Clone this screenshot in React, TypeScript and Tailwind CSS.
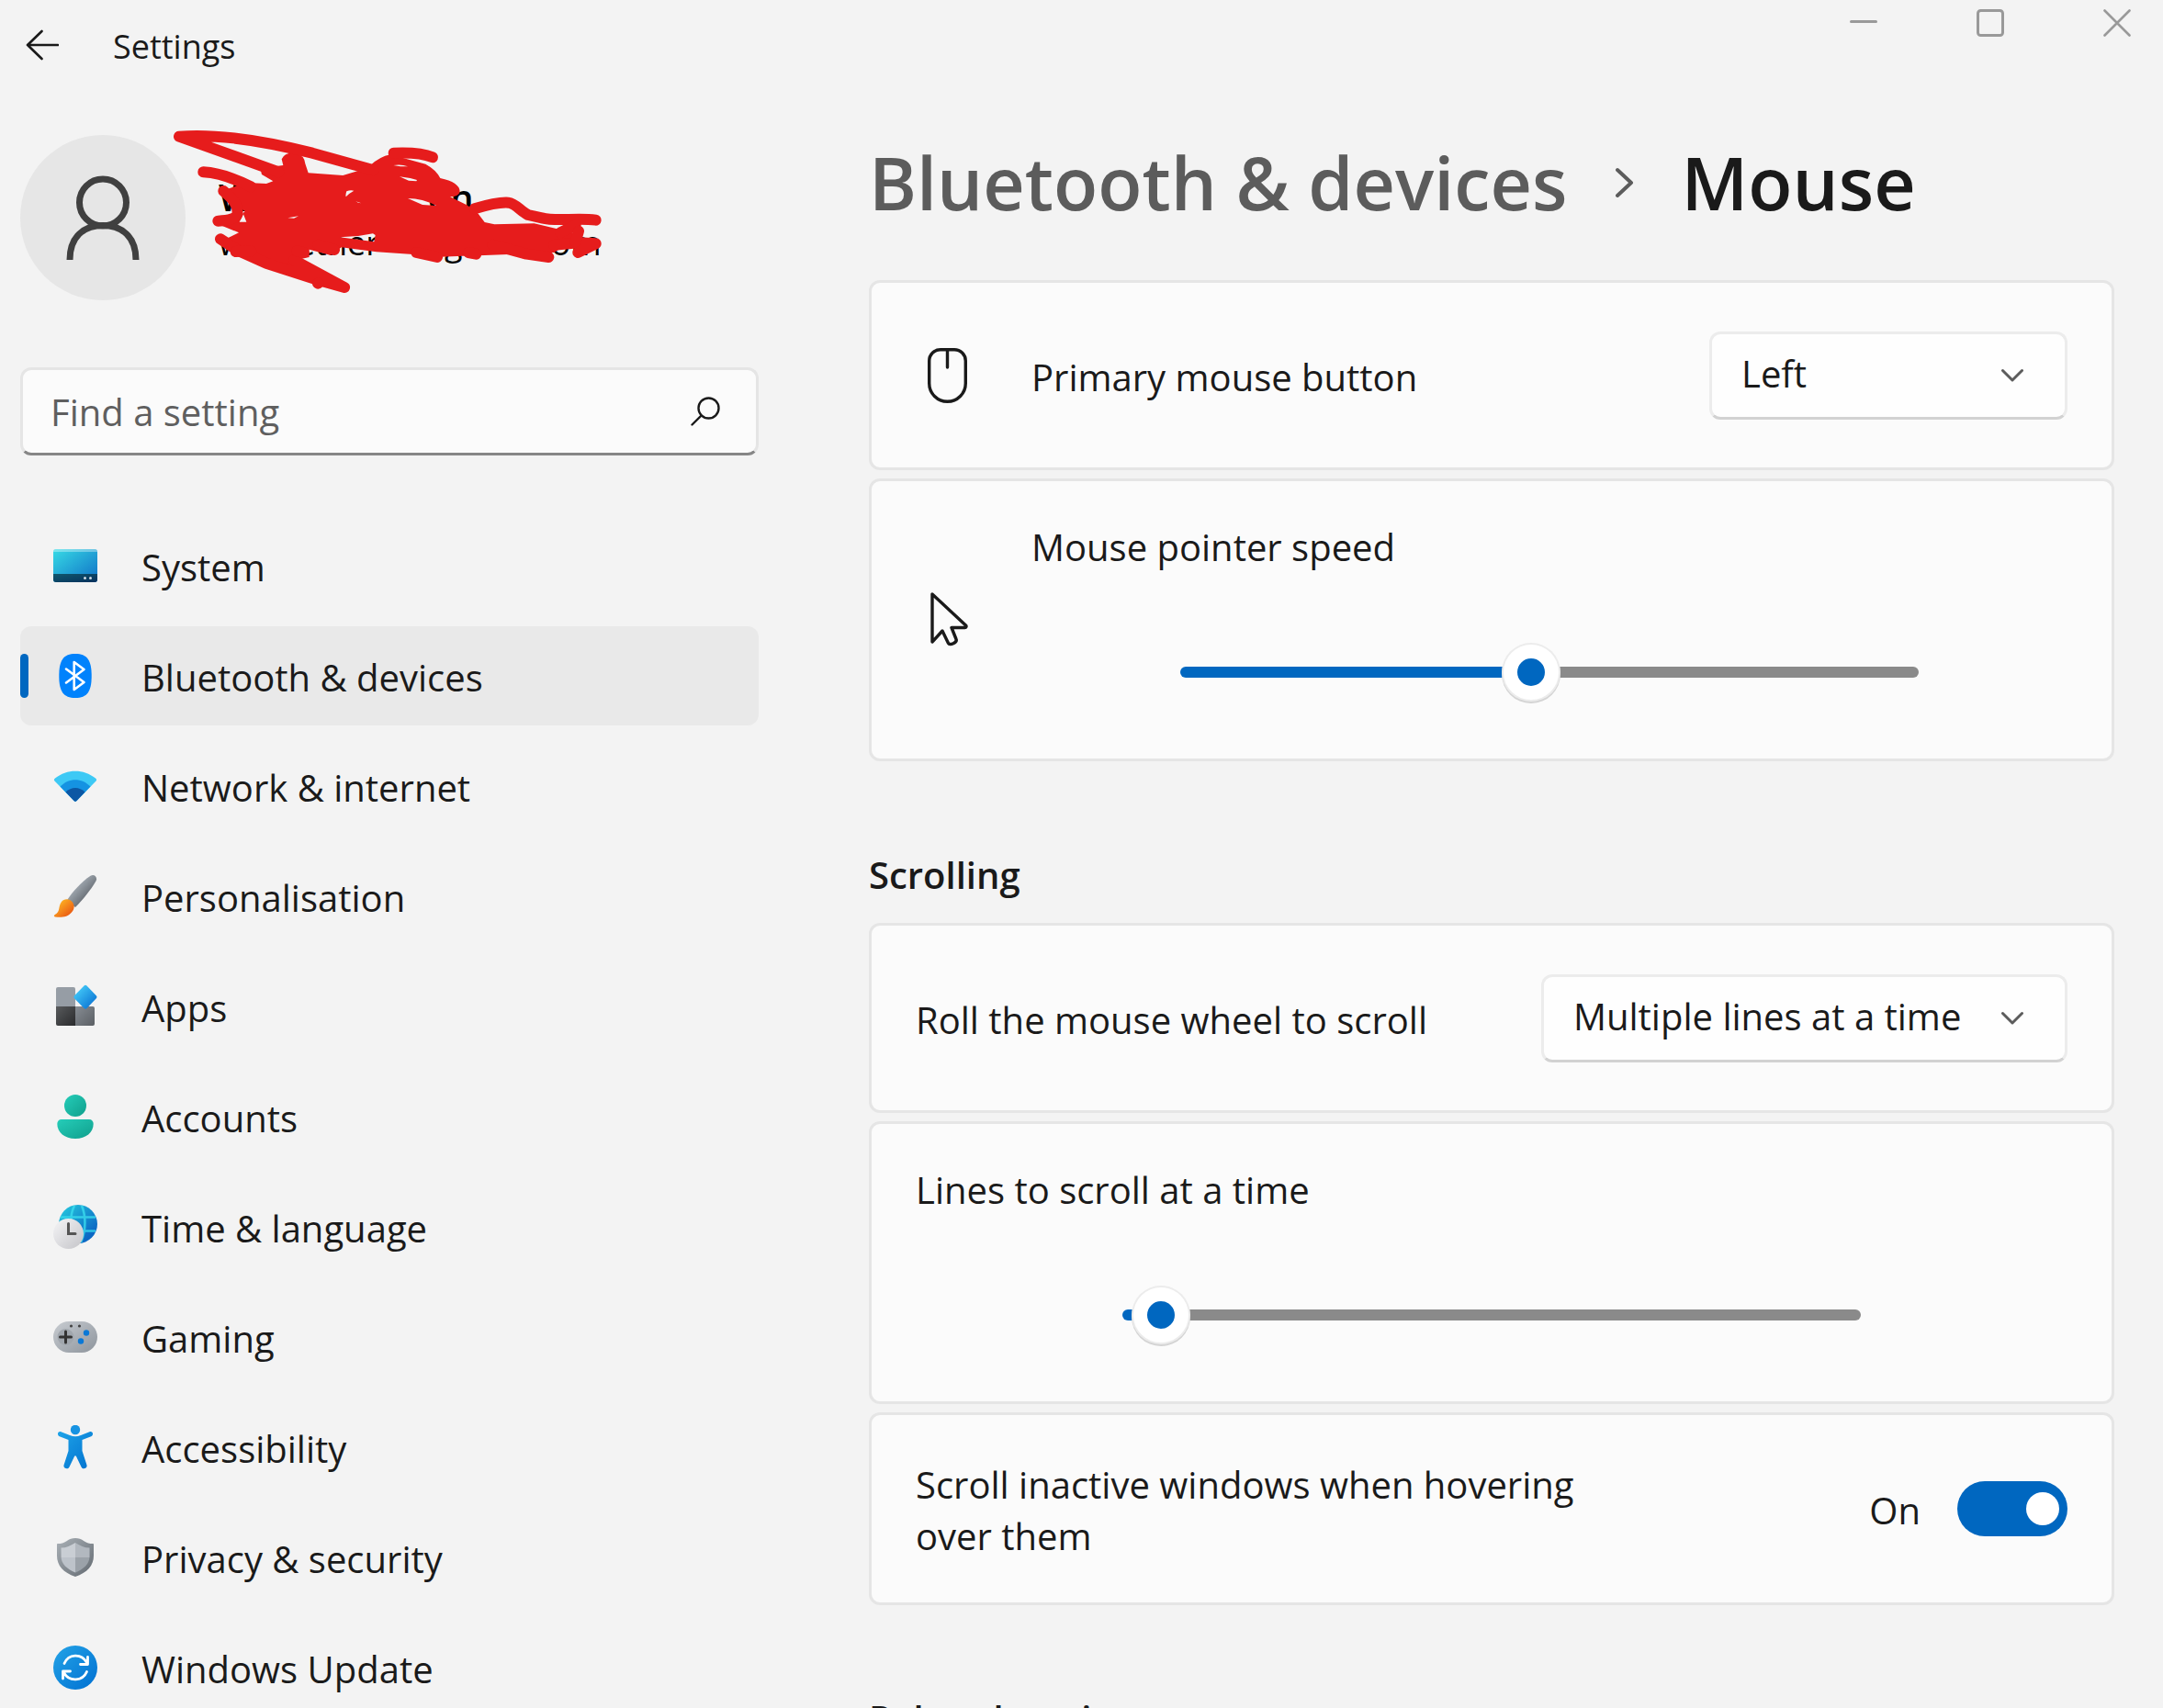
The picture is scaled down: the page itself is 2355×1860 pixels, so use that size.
import { useState } from "react";
import type { ReactNode } from "react";

const icons: Record<string, ReactNode> = {
  System: (
    <>
      <defs>
        <linearGradient id="sys" x1="0" y1="0" x2="1" y2="1">
          <stop offset="0" stopColor="#37dbe5" />
          <stop offset="1" stopColor="#0f6fc6" />
        </linearGradient>
        <linearGradient id="sysBar" x1="0" y1="0" x2="1" y2="1">
          <stop offset="0" stopColor="#10576d" />
          <stop offset="1" stopColor="#06305c" />
        </linearGradient>
      </defs>
      <rect y="6" width="48" height="36" rx="3" fill="url(#sys)" />
      <path d="M0 9a3 3 0 0 1 3-3h42a3 3 0 0 1 3 3z" fill="#fff" opacity=".35" />
      <path d="M0 33h48v6a3 3 0 0 1-3 3H3a3 3 0 0 1-3-3z" fill="url(#sysBar)" />
      <circle cx="34.500" cy="37.500" r="1.500" fill="#cfd9e3" />
      <circle cx="40.500" cy="37.500" r="1.500" fill="#cfd9e3" />
    </>
  ),
  "Bluetooth & devices": (
    <>
      <path
        d="M24 0c13 0 17.700 7 17.700 24S37 48 24 48 6.300 41 6.300 24 11 0 24 0z"
        fill="#0082fc"
      />
      <path
        d="M14 16.500 33.500 31 22.700 39V9L33.500 17 14 31.500"
        fill="none"
        stroke="#fff"
        strokeWidth="2.600"
        strokeLinecap="round"
        strokeLinejoin="round"
      />
    </>
  ),
  "Network & internet": (
    <>
      <path d="M1.500 18.500C0.500 17.500 0.800 16.500 2 15.500 15 5 33 5 46 15.500c1.200 1 1.500 2 .5 3L25.500 40c-1 1-2 1-3 0z" fill="#3dc9f5" />
      <path d="M7.500 24.500c9.500-9.800 23.500-9.800 33 0L25.500 40c-1 1-2 1-3 0z" fill="#1593e2" />
      <path d="M13.500 30.500c6-6 15-6 21 0l-9 9.500c-1 1-2 1-3 0z" fill="#0c57a4" />
    </>
  ),
  Personalisation: (
    <>
      <defs>
        <linearGradient id="brush" x1="0" y1="0" x2="1" y2="1">
          <stop offset=".3" stopColor="#a5adb5" />
          <stop offset=".7" stopColor="#666c73" />
        </linearGradient>
        <linearGradient id="paint" x1="0" y1="0" x2="1" y2="1">
          <stop offset=".2" stopColor="#fdb022" />
          <stop offset=".9" stopColor="#e85212" />
        </linearGradient>
      </defs>
      <path d="M14.500 29C21 19 31 8 40.500 1.800c4-2.500 8 1.500 6 5.500C41 17 32.500 27.500 24 36z" fill="url(#brush)" />
      <path d="M9 30c2.500-3.500 8-3.500 11-.5 4 4 3 9 0 12C16 46.500 9 47.500 2 46.500c-1.500-.3-1.500-1.800-.2-2.500C8 41 5 35.500 9 30z" fill="url(#paint)" />
    </>
  ),
  Apps: (
    <>
      <defs>
        <linearGradient id="appBlue" x1="0" y1="0" x2="1" y2="1">
          <stop offset=".2" stopColor="#3ec2f5" />
          <stop offset=".9" stopColor="#0a72d2" />
        </linearGradient>
        <linearGradient id="appDark" x1="0" y1="0" x2="1" y2="1">
          <stop offset="0" stopColor="#585a5c" />
          <stop offset="1" stopColor="#2a2b2d" />
        </linearGradient>
        <linearGradient id="appGrey" x1="0" y1="0" x2="1" y2="1">
          <stop offset="0" stopColor="#868c93" />
          <stop offset="1" stopColor="#5b5f64" />
        </linearGradient>
      </defs>
      <path d="M5 3h17a2 2 0 0 1 2 2v19H3V5a2 2 0 0 1 2-2z" fill="#969da5" />
      <path d="M3 24h21v21H5a2 2 0 0 1-2-2z" fill="url(#appDark)" />
      <path d="M24 24h19a2 2 0 0 1 2 2v17a2 2 0 0 1-2 2H24z" fill="url(#appGrey)" />
      <path d="M33.500 1.500c.9-.9 2.100-.9 3 0l10.300 10.800c.9.900.9 2.100 0 3L36.500 26c-.9.900-2.100.900-3 0L23 15.300c-.9-.9-.9-2.100 0-3z" fill="url(#appBlue)" />
    </>
  ),
  Accounts: (
    <>
      <defs>
        <linearGradient id="acc" x1="0" y1="0" x2="1" y2="1">
          <stop offset="0" stopColor="#25cdb9" />
          <stop offset="1" stopColor="#109f8c" />
        </linearGradient>
      </defs>
      <circle cx="24" cy="12" r="12" fill="url(#acc)" />
      <path d="M9 27h30c3 0 4.700 2 4.700 5 0 9-8 16-19.700 16S4.300 41 4.300 32c0-3 1.700-5 4.700-5z" fill="url(#acc)" />
    </>
  ),
  "Time & language": (
    <>
      <defs>
        <linearGradient id="globe" x1="0" y1="0" x2="1" y2="1">
          <stop offset="0" stopColor="#27cfe0" />
          <stop offset=".8" stopColor="#0c68c4" />
        </linearGradient>
        <linearGradient id="clock" x1="0" y1="0" x2="1" y2="1">
          <stop offset="0" stopColor="#f5f5f7" />
          <stop offset="1" stopColor="#c4c4c8" />
        </linearGradient>
      </defs>
      <circle cx="27" cy="21" r="21" fill="url(#globe)" />
      <g fill="none" stroke="#3ce0f0" strokeWidth="2.600" opacity=".75">
        <path d="M8 13.500h38M30 28.500h16" />
        <path d="M23 1c-3 6-4 12-3.500 18M31 1c4.500 11 5 26-1 40" />
      </g>
      <circle cx="16.500" cy="31.500" r="16.500" fill="url(#clock)" />
      <path d="M16.500 20.500v11h7.500" fill="none" stroke="#555" strokeWidth="3" strokeLinecap="round" />
    </>
  ),
  Gaming: (
    <>
      <defs>
        <linearGradient id="pad" x1="0" y1="0" x2="1" y2="1">
          <stop offset="0" stopColor="#c8ccd1" />
          <stop offset="1" stopColor="#8d949c" />
        </linearGradient>
      </defs>
      <rect y="7" width="48" height="34" rx="17" fill="url(#pad)" />
      <circle cx="13.500" cy="24" r="9" fill="#a0a6ad" />
      <path d="M13.500 18v12M7.500 24h12" stroke="#333" strokeWidth="3" strokeLinecap="round" />
      <circle cx="36" cy="19.500" r="3.200" fill="#0a78d6" />
      <circle cx="30" cy="28.500" r="3.200" fill="#0a78d6" />
      <circle cx="19.500" cy="12" r="1.600" fill="#444" />
      <circle cx="28.500" cy="12" r="1.600" fill="#444" />
    </>
  ),
  Accessibility: (
    <>
      <defs>
        <linearGradient id="a11y" x1="0" y1="0" x2="1" y2="1">
          <stop offset="0" stopColor="#1ea3e8" />
          <stop offset="1" stopColor="#0272cf" />
        </linearGradient>
      </defs>
      <circle cx="24" cy="5" r="5.200" fill="#1793e2" />
      <path
        d="M8.500 7.200 18 11c4 1.600 8 1.600 12 0l9.500-3.800c3.500-1.200 5 3.500 1.700 5L31.500 16v12l5 15.500c1 3.500-4.500 5.500-6 2L25 34c-.4-1-1.600-1-2 0l-5.500 11.500c-1.500 3.500-7 1.500-6-2l5-15.500V16l-9.700-3.800c-3.300-1.500-1.800-6.200 1.700-5z"
        fill="url(#a11y)"
      />
    </>
  ),
  "Privacy & security": (
    <>
      <defs>
        <linearGradient id="shield" x1="0" y1="0" x2="1" y2="1">
          <stop offset="0" stopColor="#a9b0b6" />
          <stop offset="1" stopColor="#636a71" />
        </linearGradient>
      </defs>
      <path d="M24 3c3.500 0 6.500 1 9.500 3.200C36.500 8.300 39.500 9 43.200 9c.5 0 .8.300.8.800V22c0 11-7 18.500-20 23C11 40.500 4 33 4 22V9.800c0-.5.3-.8.800-.8 3.700 0 6.700-.7 9.700-2.800C17.500 4 20.500 3 24 3z" fill="url(#shield)" />
      <path d="M24 8v16H8.600L8.500 13.500c6 0 10-2 15.500-5.500z" fill="#c9ced4" />
      <path d="M24 8c5.500 3.500 9.500 5.500 15.500 5.500V24H24z" fill="#b2b8bf" />
      <path d="M8.600 24H24v16.500C14.500 36.500 9 31 8.600 24z" fill="#bdc3ca" />
      <path d="M24 24h15.400C39 31 33.500 36.500 24 40.500z" fill="#9ba2a9" />
    </>
  ),
  "Windows Update": (
    <>
      <defs>
        <linearGradient id="upd" x1="0" y1="0" x2="1" y2="1">
          <stop offset="0" stopColor="#24a3e6" />
          <stop offset="1" stopColor="#0070d2" />
        </linearGradient>
      </defs>
      <circle cx="24" cy="24" r="24" fill="url(#upd)" />
      <g fill="none" stroke="#fff" strokeWidth="2.800" strokeLinecap="round" strokeLinejoin="round">
        <path d="M12 19.500C16.500 9 30.500 8 36.500 18.500M37.500 12.500v8h-8" />
        <path d="M36.500 28.500C32 39 17.500 40 11.500 29.500M10.500 36v-8h8" />
      </g>
    </>
  ),
};

function BackArrow() {
  return (
    <svg className="h-9 w-9" viewBox="0 0 36 36" fill="none" stroke="#1a1a1a" strokeWidth="2.600" strokeLinecap="round" strokeLinejoin="round">
      <path d="M35 18H2M17.500 3 2 18l15.500 15" />
    </svg>
  );
}

function Chevron() {
  return (
    <svg className="pointer-events-none absolute top-1/2 right-12 h-4 w-6 -translate-y-1/2" viewBox="0 0 24 16" fill="none" stroke="#5c5c5c" strokeWidth="3" strokeLinecap="round" strokeLinejoin="round">
      <path d="M1.500 2.500 12 13 22.500 2.500" />
    </svg>
  );
}

// red marker strokes over the account name
function Scribble() {
  return (
    <svg className="pointer-events-none absolute -top-[27px] -left-[42px] h-[220px] w-[520px]" viewBox="0 0 1560 660">
      <path
        fill="#e61c1c"
        fillRule="evenodd"
        d="M250 262 300 245 345 238 390 240 412 232 375 210 370 190 445 180 440 160Q450 138 480 140 515 145 517 175L527 205 640 213 700 195 730 180Q760 152 795 145L910 176Q945 195 958 222 1020 235 1022 265 1020 283 990 283L1045 310 1082 338 1103 366 1135 373 1265 370 1390 400 1410 415 1330 465 1200 470 940 480 880 472 750 463 635 448 600 474 530 455 530 480 500 487 655 575 640 592 560 572 400 515 240 430 300 400 215 365 240 348 300 352 320 330 275 300Z
        M630 415 690 411 738 403 746 408 742 430Z
        M652 265Q648 275 650 283 662 270 676 263 665 259 652 265Z
        M682 298 700 304 690 302Z
        M805 180Q830 175 852 184L828 184Z
        M825 217 860 222 882 228 880 232 855 230Z
        M852 288Q900 288 945 312L900 309Z
        M460 352 495 346 480 353Z
        M302 365 315 340 325 365Z"
      />
      <g fill="none" stroke="#e61c1c" strokeWidth="36" strokeLinecap="round" strokeLinejoin="round">
        <path d="M430 202 105 86C250 74 420 110 540 140L740 196" />
        <path d="M184 202C240 205 290 225 340 250" />
        <path d="M806 140C850 138 900 140 933 154" />
        <path d="M250 264C280 290 300 310 295 340Q290 360 232 362" />
        <path d="M240 421 300 460 390 500 560 555 645 579 480 490" />
        <path d="M1070 322C1110 310 1150 300 1180 302 1205 305 1220 330 1245 342L1290 352C1340 365 1400 350 1466 359" />
        <path d="M1400 375 1350 400M1466 436 1410 433 1330 440M1466 436 1408 465" />
        <path d="M1130 440 1240 470 1312 480M1050 465 1075 470M880 465 948 480M560 565 558 566" />
        <path d="M560 440 612 456M340 460 290 462M490 460 512 465M1410 395 1400 430" />
      </g>
    </svg>
  );
}

function Card({ className = "", children }: { className?: string; children: ReactNode }) {
  return (
    <div className={`rounded-xl border-[3px] border-[#e5e5e5] bg-[#fbfbfb] px-12 ${className}`}>
      {children}
    </div>
  );
}

function Dropdown({ id, options, className }: { id: string; options: string[]; className: string }) {
  return (
    <div className={`relative ${className}`}>
      <select
        id={id}
        className="h-24 w-full appearance-none rounded-xl border-[3px] border-[#ececec] border-b-[#d2d2d2] bg-[#fefefe] pb-1 pl-8 text-[40px] leading-[56px]"
      >
        {options.map((option) => (
          <option key={option}>{option}</option>
        ))}
      </select>
      <Chevron />
    </div>
  );
}

function Slider({ id, min, max, initial }: { id: string; min: number; max: number; initial: number }) {
  const [value, setValue] = useState(initial);
  const percent = ((value - min) / (max - min)) * 100;

  return (
    <input
      id={id}
      type="range"
      min={min}
      max={max}
      value={value}
      onChange={(e) => setValue(Number(e.target.value))}
      className="h-3 w-[804px] appearance-none rounded-full [&::-webkit-slider-thumb]:h-[60px] [&::-webkit-slider-thumb]:w-[60px] [&::-webkit-slider-thumb]:appearance-none [&::-webkit-slider-thumb]:rounded-full [&::-webkit-slider-thumb]:border-[15px] [&::-webkit-slider-thumb]:border-white [&::-webkit-slider-thumb]:bg-[#0067c0] [&::-webkit-slider-thumb]:shadow-[0_0_0_2px_#ececec,0_2px_0_2px_#d4d4d4]"
      style={{
        background: `linear-gradient(to right, #0067c0 ${percent}%, #8a8a8a ${percent}%)`,
      }}
    />
  );
}

export default function App() {
  return (
    <div className="flex h-screen flex-col overflow-hidden bg-[#f3f3f3] font-['Open_Sans','Noto_Sans',sans-serif] text-[40px] leading-[56px] text-[#1a1a1a]">
      {/* Title bar */}
      <header className="flex h-[98px] shrink-0 items-center pr-[35px] pl-7">
        <button aria-label="Back">
          <BackArrow />
        </button>
        <span className="ml-[59px] pt-1 text-[36px] leading-[48px]">Settings</span>
        <div className="mt-[10px] ml-auto flex gap-[108px] self-start">
          <button aria-label="Minimise">
            <svg className="h-[30px] w-[30px]" viewBox="0 0 30 30" stroke="#999" strokeWidth="3" strokeLinecap="round">
              <path d="M1.500 13.500h27" />
            </svg>
          </button>
          <button aria-label="Maximise">
            <svg className="h-[30px] w-[30px]" viewBox="0 0 30 30" fill="none" stroke="#999" strokeWidth="3">
              <rect x="1.500" y="1.500" width="27" height="27" rx="3" />
            </svg>
          </button>
          <button aria-label="Close">
            <svg className="h-[30px] w-[30px]" viewBox="0 0 30 30" stroke="#999" strokeWidth="2.600" strokeLinecap="round">
              <path d="m1.500 1.500 27 27M28.500 1.500l-27 27" />
            </svg>
          </button>
        </div>
      </header>

      <div className="flex min-h-0 flex-1">
        {/* Sidebar */}
        <aside className="ml-[22px] w-[804px] shrink-0 pt-[49px]">
          <div className="flex h-[180px] items-center">
            <div className="flex h-full w-[180px] items-center justify-center rounded-full bg-[#e6e6e6]">
              <svg className="h-24 w-24" viewBox="0 0 96 96" fill="none" stroke="#404040" strokeWidth="7">
                <ellipse cx="48" cy="31.500" rx="25.500" ry="25.500" />
                <path d="M12 94C12 69 27 56.500 48 56.500S84 69 84 94" />
              </svg>
            </div>
            <div className="relative h-full">
              <p className="pt-[42px] pl-9 text-[40px] leading-[52px] font-semibold text-black">
                W<span className="ml-[190px]">on</span>
              </p>
              <p className="pl-9 text-[36px] leading-[48px] text-black">
                w<span className="ml-[57px]">ether</span>
                <span className="ml-[71px]">g</span>
                <span className="ml-24">om</span>
              </p>
              <Scribble />
            </div>
          </div>

          <label className="relative mt-[73px] block">
            <span className="sr-only">Find a setting</span>
            <input
              type="search"
              placeholder="Find a setting"
              className="h-24 w-full rounded-xl border-[3px] border-[#e5e5e5] border-b-[#868686] bg-[#fbfbfb] pr-24 pl-[30px] placeholder:text-[#5f5f5f]"
            />
            <svg className="absolute top-8 right-[42px] h-8 w-8" viewBox="0 0 32 32" fill="none" stroke="#1a1a1a" strokeWidth="2.400" strokeLinecap="round">
              <circle cx="19.500" cy="12.500" r="11" />
              <path d="M11.500 20.500 1.500 30.500" />
            </svg>
          </label>

          <nav className="mt-[66px] flex flex-col gap-3">
            {Object.keys(icons).map((name) => {
              const active = name === "Bluetooth & devices";
              return (
                <a
                  key={name}
                  href="#"
                  aria-current={active ? "page" : undefined}
                  className={`relative flex h-[108px] items-center gap-12 rounded-xl pl-9 ${active ? "bg-[#e9e9e9]" : ""}`}
                >
                  {active && <span className="absolute top-[30px] left-0 h-12 w-[9px] rounded-full bg-[#0067c0]" />}
                  <svg className="h-12 w-12" viewBox="0 0 48 48">
                    {icons[name]}
                  </svg>
                  <span className="pt-1">{name}</span>
                </a>
              );
            })}
          </nav>
        </aside>

        {/* Mouse page */}
        <main className="mr-[53px] ml-[120px] flex-1 pt-[46px]">
          <h1 className="flex h-[110px] items-center text-[79px] leading-[110px] font-semibold">
            <a href="#" className="text-[#5c5c5c]">Bluetooth &amp; devices</a>
            <svg className="mx-[52px] h-9 w-5" viewBox="0 0 20 36" fill="none" stroke="#5c5c5c" strokeWidth="4" strokeLinecap="round" strokeLinejoin="round">
              <path d="M2 4 17 18 2 32" />
            </svg>
            Mouse
          </h1>

          <section className="mt-[51px] flex flex-col gap-[9px]">
            <Card className="flex h-[207px] items-center">
              <svg className="mr-[70px] ml-[13px] h-[60px] w-[43px]" viewBox="0 0 43 60" fill="none" stroke="#1a1a1a" strokeWidth="3.400" strokeLinecap="round">
                <path d="M14 1.700h15A12.300 12.300 0 0 1 41.300 14v24.500a19.800 19.800 0 0 1-39.600 0V14A12.300 12.300 0 0 1 14 1.700zM21.500 2v19" />
              </svg>
              <label htmlFor="primary" className="pt-1">Primary mouse button</label>
              <Dropdown id="primary" options={["Left", "Right"]} className="ml-auto w-[390px]" />
            </Card>

            <Card className="flex h-[308px]">
              <svg className="mt-[120px] mr-[69px] ml-4 h-[60px] w-[41px] shrink-0" viewBox="0 0 41 60" fill="none" stroke="#1a1a1a" strokeWidth="3.400" strokeLinejoin="round">
                <path d="M2 3v52l11-12 6.500 13.500c1.500 3 10-1 8.500-4.500L23 39.500h14.500c1.500 0 2-1.500 1-2.500z" />
              </svg>
              <div className="flex flex-1 flex-col pt-11">
                <label htmlFor="speed">Mouse pointer speed</label>
                <div className="mt-[102px] flex justify-center">
                  <Slider id="speed" min={1} max={20} initial={10} />
                </div>
              </div>
            </Card>
          </section>

          <h2 className="mt-24 font-semibold">Scrolling</h2>
          <section className="mt-6 flex flex-col gap-[9px]">
            <Card className="flex h-[207px] items-center justify-between">
              <label htmlFor="wheel" className="pt-1">Roll the mouse wheel to scroll</label>
              <Dropdown id="wheel" options={["Multiple lines at a time", "One screen at a time"]} className="w-[573px]" />
            </Card>

            <Card className="flex h-[308px] flex-col pt-11">
              <label htmlFor="lines">Lines to scroll at a time</label>
              <div className="mt-[102px] flex justify-center">
                <Slider id="lines" min={1} max={125} initial={3} />
              </div>
            </Card>

            <Card className="flex h-[210px] items-center">
              <label htmlFor="inactive" className="w-[740px] pt-1">
                Scroll inactive windows when hovering over them
              </label>
              <span className="mr-10 ml-auto pt-1">On</span>
              <input
                id="inactive"
                type="checkbox"
                role="switch"
                defaultChecked
                className="flex h-[60px] w-[120px] appearance-none items-center rounded-full bg-[#8a8a8a] px-[9px] before:h-9 before:w-9 before:rounded-full before:bg-white checked:justify-end checked:bg-[#0067c0]"
              />
            </Card>
          </section>

          <h2 className="mt-24 font-semibold">Related settings</h2>
        </main>
      </div>
    </div>
  );
}
